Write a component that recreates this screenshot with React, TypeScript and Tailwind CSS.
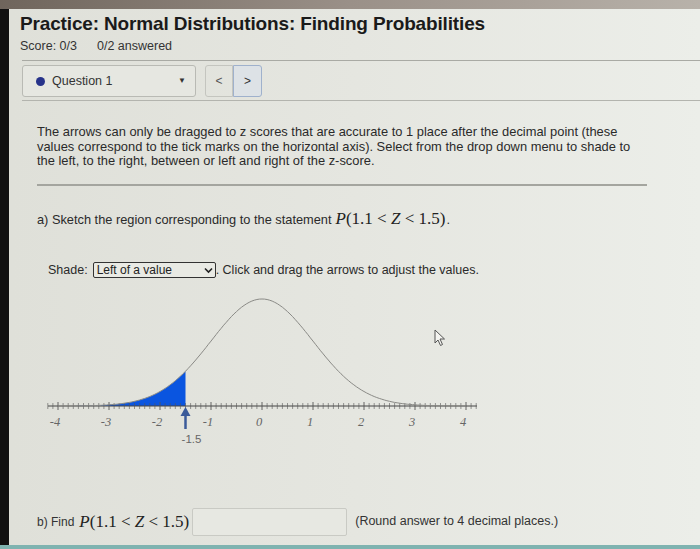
import React from 'react';

const ORIGIN = 222;
const UNIT = 51;
const AXIS_Y = 115;
const PEAK_H = 107;

const px = (z: number) => ORIGIN + UNIT * z;
const py = (z: number) => AXIS_Y - PEAK_H * Math.exp(-(z * z) / 2);

function buildCurve(from: number, to: number, step = 0.05) {
  const pts: string[] = [];
  for (let z = from; z <= to + 1e-9; z += step) {
    pts.push(`${px(z).toFixed(1)},${py(z).toFixed(1)}`);
  }
  return pts;
}

function MathExpr() {
  return (
    <span className="font-['Liberation_Serif',serif] text-[17px] text-[#222]">
      <i>P</i>(1.1 &lt; <i>Z</i> &lt; 1.5)
    </span>
  );
}

function NormalGraph() {
  const curve = buildCurve(-4, 4);
  const fill = [`${px(-4)},${AXIS_Y}`, ...buildCurve(-4, -1.5), `${px(-1.5)},${AXIS_Y}`].join(' ');

  const ticks = [];
  for (let i = -42; i <= 42; i++) {
    const z = i / 10;
    const major = i % 10 === 0;
    ticks.push(
      <line
        key={i}
        x1={px(z)}
        x2={px(z)}
        y1={AXIS_Y - (major ? 4 : 3)}
        y2={AXIS_Y + (major ? 4 : 3)}
        stroke="#555"
        strokeWidth={major ? 0.9 : 0.6}
      />
    );
  }

  return (
    <svg width="460" height="160" viewBox="0 0 460 160" className="block">
      <polygon points={fill} fill="#0a55e0" />
      <line x1={8} x2={437} y1={AXIS_Y} y2={AXIS_Y} stroke="#444" strokeWidth="1" />
      {ticks}
      <polyline points={curve.join(' ')} fill="none" stroke="#8a8a86" strokeWidth="1" />
      {[-4, -3, -2, -1, 0, 1, 2, 3, 4].map((z) => (
        <text
          key={z}
          x={px(z) - 3}
          y={AXIS_Y + 20}
          textAnchor="middle"
          fontFamily="Liberation Serif, serif"
          fontStyle="italic"
          fontSize="12.5"
          fill="#666"
        >
          {z < 0 ? `-${Math.abs(z)}` : z}
        </text>
      ))}
      {/* drag arrow */}
      <line x1={px(-1.5)} x2={px(-1.5)} y1={AXIS_Y + 6} y2={AXIS_Y + 23} stroke="#3b5b9a" strokeWidth="2.5" />
      <polygon
        points={`${px(-1.5) - 5},${AXIS_Y + 10} ${px(-1.5)},${AXIS_Y + 1} ${px(-1.5) + 5},${AXIS_Y + 10}`}
        fill="#3b5b9a"
      />
      <text
        x={px(-1.5) + 6}
        y={AXIS_Y + 37}
        textAnchor="middle"
        fontFamily="Liberation Sans, Arial, sans-serif"
        fontSize="11.5"
        fill="#666"
      >
        -1.5
      </text>
    </svg>
  );
}

export default function App() {
  return (
    <div className="w-[700px] h-[549px] overflow-hidden flex flex-col bg-[#e3e4de] font-['Liberation_Sans',Arial,sans-serif] text-[#222]">
      {/* photo bezel top */}
      <div className="h-[9px] bg-gradient-to-r from-[#6f655c] via-[#9a9088] to-[#b8b2aa] shrink-0" />
      <div className="flex flex-1 min-h-0">
        <div className="w-[9px] bg-[#111] shrink-0" />
        <div className="relative flex-1 flex flex-col pl-[11px] bg-gradient-to-r from-[#dfe0d9] via-[#e5e6e0] to-[#eceee9]">
          <h1 className="mt-[2px] text-[19px] leading-[26px] font-bold tracking-[-0.15px] text-[#1a1a1a]">
            Practice: Normal Distributions: Finding Probabilities
          </h1>
          <div className="flex gap-[20px] text-[12.5px] leading-[16px] text-[#333] mt-[1px]">
            <span>Score: 0/3</span>
            <span>0/2 answered</span>
          </div>

          <div className="ml-[2px] mt-[6px] border-t border-[#a9aaa4]" />

          <div className="ml-[2px] mt-[4px] flex items-center gap-[9px]">
            <div className="w-[174px] h-[32px] border border-[#b9bab4] rounded-[3px] flex items-center pl-[13px] pr-[9px] bg-[#e6e7e1]">
              <span className="w-[9px] h-[9px] rounded-full bg-[#27338a] mr-[7px]" />
              <span className="text-[12.5px] text-[#333]">Question 1</span>
              <span className="ml-auto text-[8px] text-[#333]">▼</span>
            </div>
            <div className="flex h-[32px]">
              <div className="w-[28px] border border-[#c4c5bf] rounded-l-[3px] flex items-center justify-center text-[12px] text-[#555]">
                &lt;
              </div>
              <div className="w-[29px] border border-[#9fb1cc] bg-[#dde2e6] rounded-r-[3px] flex items-center justify-center text-[12px] text-[#333]">
                &gt;
              </div>
            </div>
          </div>

          <div className="ml-[2px] mt-[3px] border-t border-[#b3b4ae]" />

          <p className="ml-[17px] mt-[24px] w-[600px] text-[12.9px] leading-[14.5px] text-[#2a2a2a]">
            The arrows can only be dragged to z scores that are accurate to 1 place after the decimal point (these values correspond to the tick marks on the horizontal axis). Select from the drop down menu to shade to the left, to the right, between or left and right of the z-score.
          </p>

          <div className="ml-[17px] mt-[15px] w-[610px] border-t-2 border-[#a4a59f]" />

          <div className="ml-[17px] mt-[20px] flex items-baseline gap-[4px] text-[12.8px] text-[#2a2a2a]">
            <span>a) Sketch the region corresponding to the statement</span>
            <MathExpr />
            <span className="-ml-[3px]">.</span>
          </div>

          <div className="ml-[28px] mt-[30px] flex items-center text-[12.5px] text-[#2a2a2a]">
            <span className="mr-[5px]">Shade:</span>
            <div className="w-[123px] h-[16px] border border-[#333] rounded-[2px] flex items-center pl-[3px] bg-[#e9eae4]">
              <span className="text-[12px] leading-none text-[#222]">Left of a value</span>
              <span className="ml-auto w-[13px] h-full flex items-center justify-center">
                <svg width="9" height="7" viewBox="0 0 9 7">
                  <path d="M1 1.5 L4.5 5 L8 1.5" fill="none" stroke="#222" strokeWidth="1.6" />
                </svg>
              </span>
            </div>
            <span>. Click and drag the arrows to adjust the values.</span>
          </div>

          <div className="ml-[20px] mt-[11px]">
            <NormalGraph />
          </div>

          <div className="ml-[17px] mt-[57px] flex items-center text-[12px] text-[#333]">
            <span className="mr-[5px]">b) Find</span>
            <MathExpr />
            <div className="ml-[3px] w-[155px] h-[28px] border border-[#c9cac4] rounded-[2px] bg-[#e7e8e2]" />
            <span className="ml-[8px] text-[12.5px]">(Round answer to 4 decimal places.)</span>
          </div>

          {/* mouse cursor over the graph */}
          <svg className="absolute left-[425px] top-[320px]" width="12" height="18" viewBox="0 0 12 18">
            <path d="M1 1 L1 14 L4 11 L6.5 16.5 L8.5 15.5 L6 10 L10.5 10 Z" fill="#f4f4f0" stroke="#555" strokeWidth="1" />
          </svg>
        </div>
      </div>
      <div className="h-[4px] bg-[#7fb3b0] shrink-0" />
    </div>
  );
}
